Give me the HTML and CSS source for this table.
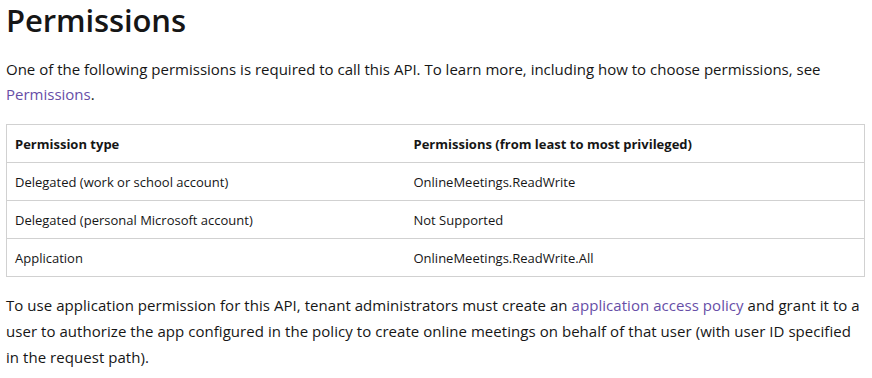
FILE: index.html
```html
<!DOCTYPE html>
<html lang="en">
<head>
<meta charset="UTF-8">
<title>Permissions</title>
<link rel="stylesheet" href="styles.css">
</head>
<body>
<main class="content">
  <h2>Permissions</h2>
  <p>One of the following permissions is required to call this API. To learn more, including how to choose permissions, see <a href="#">Permissions</a>.</p>

  <table class="perm-table">
    <thead>
      <tr>
        <th>Permission type</th>
        <th>Permissions (from least to most privileged)</th>
      </tr>
    </thead>
    <tbody>
      <tr>
        <td>Delegated (work or school account)</td>
        <td>OnlineMeetings.ReadWrite</td>
      </tr>
      <tr>
        <td>Delegated (personal Microsoft account)</td>
        <td>Not Supported</td>
      </tr>
      <tr>
        <td>Application</td>
        <td>OnlineMeetings.ReadWrite.All</td>
      </tr>
    </tbody>
  </table>

  <p class="note">To use application permission for this API, tenant administrators must create an <a href="#">application access policy</a> and grant it to a user to authorize the app configured in the policy to create online meetings on behalf of that user (with user ID specified in the request path).</p>
</main>
</body>
</html>
```

FILE: styles.css
```css
* { box-sizing: border-box; margin: 0; padding: 0; }

body {
  font-family: "Open Sans", "Noto Sans", sans-serif;
  background: #fff;
  color: #161616;
}

.content {
  padding: 0 7px 0 6px;
}

h2 {
  font-size: 31px;
  font-weight: 600;
  line-height: 40px;
  letter-spacing: -0.1px;
}

p {
  font-size: 15px;
  line-height: 25px;
  margin-top: 17px;
}

a {
  color: #674ea7;
  text-decoration: none;
}

.perm-table {
  width: 100%;
  border-collapse: collapse;
  margin-top: 17px;
  font-size: 13px;
  border: 1px solid #d1d1d1;
}

.perm-table th,
.perm-table td {
  text-align: left;
  padding: 0 8px;
  height: 38px;
  border-top: 1px solid #d1d1d1;
  vertical-align: middle;
}

.perm-table th {
  font-weight: 700;
}

.perm-table th:first-child,
.perm-table td:first-child {
  width: 399px;
}

.note {
  margin-top: 15px;
  line-height: 26px;
  letter-spacing: 0.05px;
}
```
